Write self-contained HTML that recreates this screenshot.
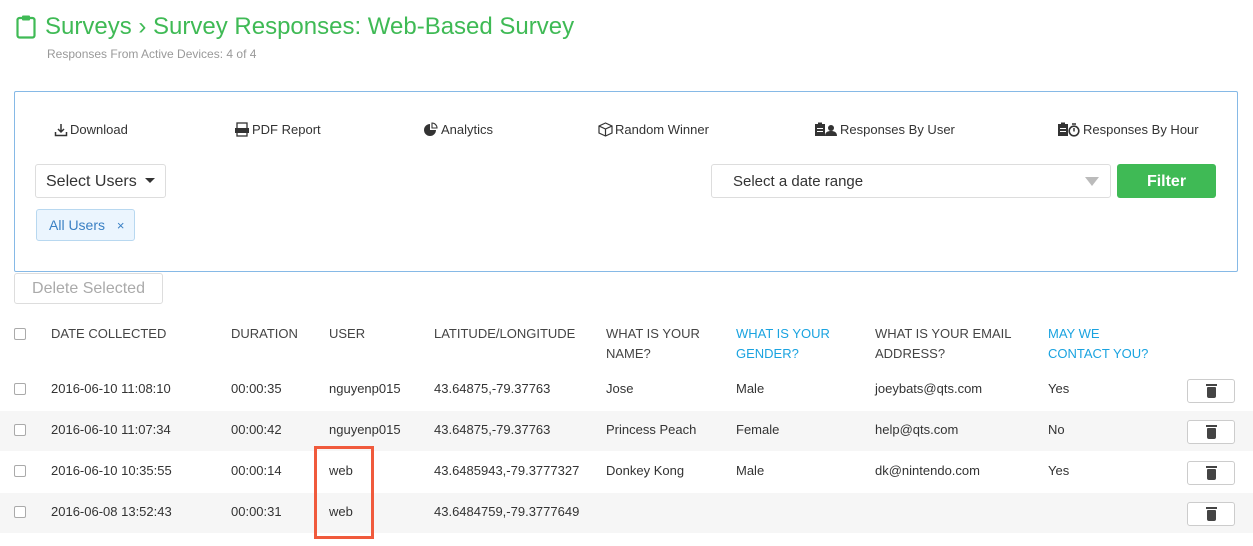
<!DOCTYPE html>
<html><head><style>
*{margin:0;padding:0;box-sizing:border-box}
body{width:1253px;height:546px;background:#fff;font-family:"Liberation Sans",sans-serif;color:#333;position:relative;overflow:hidden}
.a{position:absolute;white-space:nowrap}
.t{font-size:13px;color:#333}
.h{font-size:13px;color:#444;line-height:20px}
.blue{color:#1aa3e0}
.cb{position:absolute;width:12px;height:12px;border:1px solid #aaa;border-radius:2px;background:#fff}
.tb{position:absolute;left:1187px;width:48px;height:24px;border:1px solid #ccc;border-radius:3px;background:#fff}
.tb::after{content:"";position:absolute;left:19px;top:7px;width:9px;height:11px;background:#444;border-radius:1px 1px 2px 2px}
.tb::before{content:"";position:absolute;left:18px;top:4px;width:11px;height:2px;background:#444}
.act{font-size:13px;color:#333;display:flex;align-items:center;gap:2px}
.act svg{display:block}
</style></head><body>
<svg class="a" style="left:16px;top:14px" width="20" height="25" viewBox="0 0 20 25"><rect x="1.5" y="4" width="17" height="19.5" rx="2" fill="none" stroke="#3fba55" stroke-width="2.2"/><rect x="6" y="1.5" width="8" height="5" rx="1" fill="#3fba55"/></svg>
<div class="a" style="left:45px;top:13px;font-size:24px;color:#3fba55">Surveys › Survey Responses: Web-Based Survey</div>
<div class="a" style="left:47px;top:47px;font-size:12px;color:#999">Responses From Active Devices: 4 of 4</div>

<div class="a" style="left:14px;top:91px;width:1224px;height:181px;border:1px solid #86b9e6;border-radius:2px"></div>
<div class="a act" style="left:54px;top:122px"><svg width="14" height="14" viewBox="0 0 14 14"><path d="M7 1v8M4 6l3 3 3-3M1.5 9v3.5h11V9" fill="none" stroke="#333" stroke-width="1.5"/></svg>Download</div>
<div class="a act" style="left:234px;top:122px"><svg width="16" height="15" viewBox="0 0 16 15"><rect x="3" y="1" width="10" height="13" fill="none" stroke="#333" stroke-width="1.3"/><rect x="1" y="6" width="14" height="5" fill="#333"/></svg>PDF Report</div>
<div class="a act" style="left:423px;top:122px"><svg width="16" height="15" viewBox="0 0 16 15"><path d="M7 2A6 6 0 1 0 13 8H7Z" fill="#333"/><path d="M9 1v5h5A5 5 0 0 0 9 1Z" fill="none" stroke="#333" stroke-width="1.1"/></svg>Analytics</div>
<div class="a act" style="left:598px;top:122px"><svg width="15" height="15" viewBox="0 0 15 15"><path d="M7.5 1L14 4v7l-6.5 3L1 11V4Z M1 4l6.5 3L14 4 M7.5 7v7" fill="none" stroke="#333" stroke-width="1.2"/></svg>Random Winner</div>
<div class="a act" style="left:814px;top:122px"><svg width="24" height="15" viewBox="0 0 24 15"><rect x="1" y="2" width="10" height="12" fill="#333"/><rect x="4" y="0.5" width="4" height="3" fill="#333"/><rect x="3" y="6" width="6" height="1" fill="#fff"/><rect x="3" y="9" width="6" height="1" fill="#fff"/><circle cx="17" cy="6" r="3" fill="#333"/><path d="M11 14c0-4 3-5 6-5s6 1 6 5Z" fill="#333"/></svg>Responses By User</div>
<div class="a act" style="left:1057px;top:122px"><svg width="24" height="15" viewBox="0 0 24 15"><rect x="1" y="2" width="10" height="12" fill="#333"/><rect x="4" y="0.5" width="4" height="3" fill="#333"/><rect x="3" y="6" width="6" height="1" fill="#fff"/><rect x="3" y="9" width="6" height="1" fill="#fff"/><circle cx="17" cy="9" r="4.8" fill="none" stroke="#333" stroke-width="1.6"/><path d="M17 6v3.5M15 2h4" stroke="#333" stroke-width="1.5"/></svg>Responses By Hour</div>

<div class="a" style="left:35px;top:164px;width:131px;height:34px;border:1px solid #ddd;border-radius:3px;font-size:16px;color:#333;padding:8px 0 0 10px">Select Users <span style="display:inline-block;width:0;height:0;border-left:5px solid transparent;border-right:5px solid transparent;border-top:5px solid #333;vertical-align:3px;margin-left:4px"></span></div>
<div class="a" style="left:36px;top:209px;width:99px;height:32px;border:1px solid #b8d8f0;background:#ebf5fe;border-radius:3px;font-size:14px;color:#3a80c4;padding:7px 0 0 12px">All Users <span style="margin-left:8px;font-size:13px">×</span></div>
<div class="a" style="left:711px;top:164px;width:400px;height:34px;border:1px solid #ddd;border-radius:3px;font-size:15px;color:#333;padding:8px 0 0 21px">Select a date range</div>
<div class="a" style="left:1085px;top:177px;width:0;height:0;border-left:7px solid transparent;border-right:7px solid transparent;border-top:9px solid #bbb"></div>
<div class="a" style="left:1117px;top:164px;width:99px;height:34px;background:#3fba55;border-radius:3px;color:#fff;font-size:16px;font-weight:bold;text-align:center;line-height:36px">Filter</div>

<div class="a" style="left:14px;top:273px;width:149px;height:31px;border:1px solid #ddd;border-radius:3px;color:#aaa;font-size:16px;text-align:center;line-height:29px">Delete Selected</div>

<div class="cb" style="left:14px;top:328px"></div>
<div class="a h" style="left:51px;top:324px">DATE COLLECTED</div>
<div class="a h" style="left:231px;top:324px">DURATION</div>
<div class="a h" style="left:329px;top:324px">USER</div>
<div class="a h" style="left:434px;top:324px">LATITUDE/LONGITUDE</div>
<div class="a h" style="left:606px;top:324px">WHAT IS YOUR<br>NAME?</div>
<div class="a h blue" style="left:736px;top:324px">WHAT IS YOUR<br>GENDER?</div>
<div class="a h" style="left:875px;top:324px">WHAT IS YOUR EMAIL<br>ADDRESS?</div>
<div class="a h blue" style="left:1048px;top:324px">MAY WE<br>CONTACT YOU?</div>

<div class="a" style="left:0;top:411px;width:1253px;height:40px;background:#f6f6f6"></div>
<div class="a" style="left:0;top:493px;width:1253px;height:40px;background:#f6f6f6"></div>

<div class="cb" style="left:14px;top:383px"></div>
<div class="a t" style="left:51px;top:381px">2016-06-10 11:08:10</div><div class="a t" style="left:231px;top:381px">00:00:35</div><div class="a t" style="left:329px;top:381px">nguyenp015</div><div class="a t" style="left:434px;top:381px">43.64875,-79.37763</div><div class="a t" style="left:606px;top:381px">Jose</div><div class="a t" style="left:736px;top:381px">Male</div><div class="a t" style="left:875px;top:381px">joeybats@qts.com</div><div class="a t" style="left:1048px;top:381px">Yes</div><div class="tb" style="top:379px"></div>

<div class="cb" style="left:14px;top:424px"></div>
<div class="a t" style="left:51px;top:422px">2016-06-10 11:07:34</div><div class="a t" style="left:231px;top:422px">00:00:42</div><div class="a t" style="left:329px;top:422px">nguyenp015</div><div class="a t" style="left:434px;top:422px">43.64875,-79.37763</div><div class="a t" style="left:606px;top:422px">Princess Peach</div><div class="a t" style="left:736px;top:422px">Female</div><div class="a t" style="left:875px;top:422px">help@qts.com</div><div class="a t" style="left:1048px;top:422px">No</div><div class="tb" style="top:420px"></div>

<div class="cb" style="left:14px;top:465px"></div>
<div class="a t" style="left:51px;top:463px">2016-06-10 10:35:55</div><div class="a t" style="left:231px;top:463px">00:00:14</div><div class="a t" style="left:329px;top:463px">web</div><div class="a t" style="left:434px;top:463px">43.6485943,-79.3777327</div><div class="a t" style="left:606px;top:463px">Donkey Kong</div><div class="a t" style="left:736px;top:463px">Male</div><div class="a t" style="left:875px;top:463px">dk@nintendo.com</div><div class="a t" style="left:1048px;top:463px">Yes</div><div class="tb" style="top:461px"></div>

<div class="cb" style="left:14px;top:506px"></div>
<div class="a t" style="left:51px;top:504px">2016-06-08 13:52:43</div><div class="a t" style="left:231px;top:504px">00:00:31</div><div class="a t" style="left:329px;top:504px">web</div><div class="a t" style="left:434px;top:504px">43.6484759,-79.3777649</div><div class="tb" style="top:502px"></div>

<div class="a" style="left:314px;top:446px;width:60px;height:93px;border:3px solid #f05a3c"></div>
</body></html>
